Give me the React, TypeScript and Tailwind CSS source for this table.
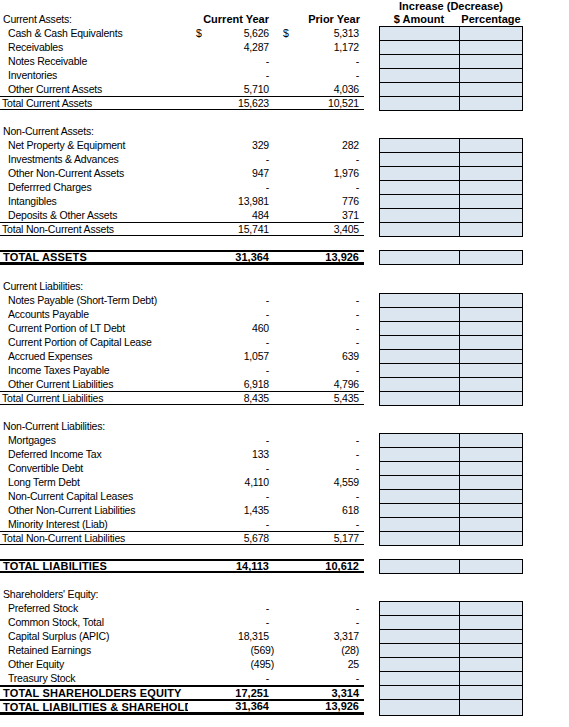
type Kind = 'section' | 'item' | 'total' | 'blank' | 'grand'

interface Row {
  kind: Kind
  label?: string
  cur?: string
  prior?: string
  dollar?: boolean
  h?: string
  boxH?: string
  line?: string
}

const total = (label: string, cur: string, prior: string): Row => ({
  kind: 'total',
  label,
  cur,
  prior,
  line: 'border-t border-b border-black',
})

const item = (label: string, cur = '-', prior = '-'): Row => ({ kind: 'item', label, cur, prior })

// "Current Assets:" sits on the column header row, so the list starts with Cash
const rows: Row[] = [
  { kind: 'item', label: 'Cash & Cash Equivalents', cur: '5,626', prior: '5,313', dollar: true },
  item('Receivables', '4,287', '1,172'),
  item('Notes Receivable'),
  item('Inventories'),
  item('Other Current Assets', '5,710', '4,036'),
  total('Total Current Assets', '15,623', '10,521'),
  { kind: 'blank' },
  { kind: 'section', label: 'Non-Current Assets:' },
  item('Net Property & Equipment', '329', '282'),
  item('Investments & Advances'),
  item('Other Non-Current Assets', '947', '1,976'),
  item('Deferrred Charges'),
  item('Intangibles', '13,981', '776'),
  item('Deposits & Other Assets', '484', '371'),
  total('Total Non-Current Assets', '15,741', '3,405'),
  { kind: 'blank' },
  {
    kind: 'grand',
    label: 'TOTAL ASSETS',
    cur: '31,364',
    prior: '13,926',
    h: 'h-[15px]',
    boxH: 'h-[15px]',
    line: 'border-t-2 border-b-[3px] border-black',
  },
  { kind: 'blank' },
  { kind: 'section', label: 'Current Liabilities:' },
  item('Notes Payable (Short-Term Debt)'),
  item('Accounts Payable'),
  item('Current Portion of LT Debt', '460'),
  item('Current Portion of Capital Lease'),
  item('Accrued Expenses', '1,057', '639'),
  item('Income Taxes Payable'),
  item('Other Current Liabilities', '6,918', '4,796'),
  total('Total Current Liabilities', '8,435', '5,435'),
  { kind: 'blank' },
  { kind: 'section', label: 'Non-Current Liabilities:' },
  item('Mortgages'),
  item('Deferred Income Tax', '133'),
  item('Convertible Debt'),
  item('Long Term Debt', '4,110', '4,559'),
  item('Non-Current Capital Leases'),
  item('Other Non-Current Liabilities', '1,435', '618'),
  item('Minority Interest (Liab)'),
  total('Total Non-Current Liabilities', '5,678', '5,177'),
  { kind: 'blank' },
  {
    kind: 'grand',
    label: 'TOTAL LIABILITIES',
    cur: '14,113',
    prior: '10,612',
    line: 'border-t-2 border-b-2 border-black',
  },
  { kind: 'blank' },
  { kind: 'section', label: "Shareholders' Equity:" },
  item('Preferred Stock'),
  item('Common Stock, Total'),
  item('Capital Surplus (APIC)', '18,315', '3,317'),
  item('Retained Earnings', '(569)', '(28)'),
  item('Other Equity', '(495)', '25'),
  item('Treasury Stock'),
  {
    kind: 'grand',
    label: 'TOTAL SHAREHOLDERS EQUITY',
    cur: '17,251',
    prior: '3,314',
    line: 'border-t-2 border-black',
  },
  {
    kind: 'grand',
    label: 'TOTAL LIABILITIES & SHAREHOLDERS EQUITY',
    cur: '31,364',
    prior: '13,926',
    h: 'h-[16px]',
    boxH: 'h-[17px]',
    line: 'border-t-2 border-b-[3px] border-black',
  },
]

const labelPad: Record<Kind, string> = {
  section: 'pl-[3px]',
  item: 'pl-[8px]',
  total: 'pl-[2px]',
  blank: '',
  grand: 'pl-[3px] font-bold text-[11px] tracking-[0.15px]',
}

function SheetRow({ row }: { row: Row }) {
  const hasBox = row.kind === 'item' || row.kind === 'total' || row.kind === 'grand'
  const bold = row.kind === 'grand'
  const negCur = row.cur?.startsWith('(')

  return (
    <div className={`flex ${row.h ?? 'h-[14px]'}`}>
      <div className={`flex w-[364px] items-center ${row.line ?? ''}`}>
        <div className={`w-[188px] overflow-hidden whitespace-nowrap leading-[12px] ${labelPad[row.kind]}`}>
          {row.label}
        </div>
        <div className={`flex w-[84px] justify-between pl-[8px] pr-[3px] ${bold ? 'font-bold text-[11px] tracking-normal' : ''}`}>
          <span>{row.dollar ? '$' : ''}</span>
          <span className={negCur ? 'mr-[-5px]' : ''}>{row.cur}</span>
        </div>
        <div className={`flex w-[92px] justify-between pl-[11px] pr-[5px] ${bold ? 'font-bold text-[11px] tracking-normal' : ''}`}>
          <span>{row.dollar ? '$' : ''}</span>
          <span>{row.prior}</span>
        </div>
      </div>
      <div className="w-[15px]" />
      {hasBox && (
        <div className={`flex w-[144px] shrink-0 ${row.boxH ?? 'h-[15px]'}`}>
          <div className="w-[80px] border border-r-0 border-black bg-[#dce6f1]" />
          <div className="w-[64px] border border-black bg-[#dce6f1]" />
        </div>
      )}
    </div>
  )
}

export default function App() {
  return (
    <div className="h-[727px] w-[569px] overflow-hidden bg-white font-['Liberation_Sans',Arial,sans-serif] text-[10.5px] leading-none tracking-[-0.2px] text-black">
      <div className="flex h-[12px] items-center font-bold text-[11px] tracking-normal">
        <div className="w-[379px]" />
        <div className="w-[144px] text-center">Increase (Decrease)</div>
      </div>
      <div className="flex h-[14px] items-center">
        <div className="w-[188px] pl-[3px]">Current Assets:</div>
        <div className="w-[84px] pr-[3px] text-right font-bold text-[11px] tracking-normal">Current Year</div>
        <div className="w-[92px] pr-[4px] text-right font-bold text-[11px] tracking-normal">Prior Year</div>
        <div className="w-[15px]" />
        <div className="w-[80px] text-center font-bold text-[11px] tracking-normal">$ Amount</div>
        <div className="w-[64px] text-center font-bold text-[11px] tracking-normal">Percentage</div>
      </div>
      {rows.map((row, i) => (
        <SheetRow key={i} row={row} />
      ))}
    </div>
  )
}
